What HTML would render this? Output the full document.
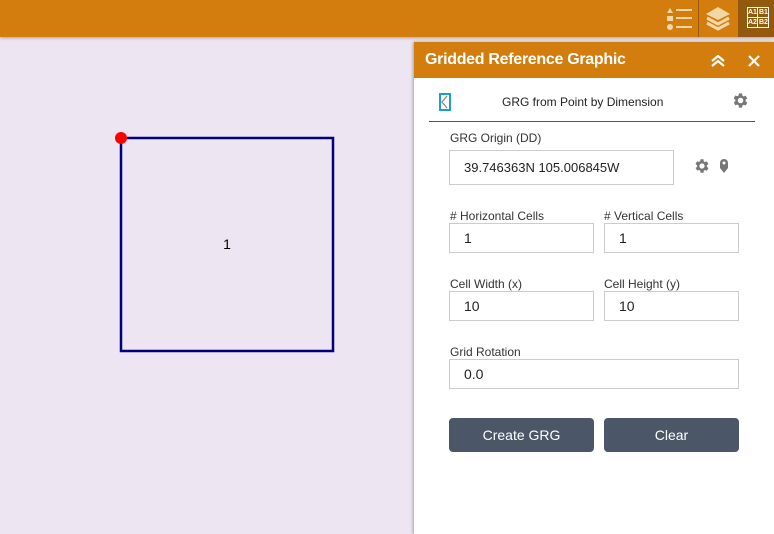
<!DOCTYPE html>
<html><head><style>
body{margin:0;width:774px;height:534px;overflow:hidden;background:#ede5f1;font-family:"Liberation Sans",sans-serif;position:relative}
.top{position:absolute;left:0;top:0;width:774px;height:37px;background:#d27d0e;box-shadow:0 1px 3px rgba(0,0,0,.3)}
.panel{position:absolute;left:414px;top:42px;width:360px;height:492px;background:#fff;box-shadow:-1px 0 3px rgba(0,0,0,.3)}
.hdr{height:36px;background:#d27d0e;color:#fff;font-weight:bold;font-size:16px;letter-spacing:-0.3px;line-height:36px;padding-left:11px}
.lbl{position:absolute;font-size:12px;color:#333}
.inp{position:absolute;border:1px solid #ccc;height:28px;box-sizing:border-box;font-size:14px;color:#222;line-height:28px;padding-left:14px}
.btn{position:absolute;background:#4b5667;color:#fff;border-radius:4px;font-size:14px;text-align:center;line-height:34px;height:34px;width:145px}
</style></head><body>
<div class="top">
<svg style="position:absolute;left:665px;top:5px" width="28" height="26"><polygon points="5,3 8,8 2,8" fill="#f5d7a6"/><rect x="2" y="11" width="6" height="5" fill="#f5d7a6"/><circle cx="5" cy="22" r="3" fill="#f5d7a6"/><rect x="11" y="4" width="16" height="2" fill="#f5d7a6"/><rect x="11" y="12" width="16" height="2" fill="#f5d7a6"/><rect x="11" y="21" width="16" height="2" fill="#f5d7a6"/></svg>
<div style="position:absolute;left:698px;top:0;width:1px;height:37px;background:#9a5b0c"></div>
<svg style="position:absolute;left:705px;top:5px" width="26" height="26"><polygon points="13,2 25,9 13,15 1,9" fill="#f5d7a6"/><polyline points="2,13 13,19 24,13" fill="none" stroke="#f5d7a6" stroke-width="3"/><polyline points="2,18 13,24 24,18" fill="none" stroke="#f5d7a6" stroke-width="3"/></svg>
<div style="position:absolute;left:738px;top:0;width:36px;height:37px;background:#935a0e"></div>
<div style="position:absolute;left:747px;top:7px;width:22px;height:21px;border:1px solid #fff;box-sizing:border-box;font-size:7px;color:#fff;font-weight:bold;line-height:10px;text-align:center">
<div style="position:absolute;left:9px;top:0;width:1px;height:19px;background:#fff"></div><div style="position:absolute;left:0;top:9px;width:20px;height:1px;background:#fff"></div>
<span style="position:absolute;left:0;top:0">A1</span><span style="position:absolute;left:11px;top:0">B1</span><span style="position:absolute;left:0;top:10px">A2</span><span style="position:absolute;left:11px;top:10px">B2</span></div>
</div>
<svg style="position:absolute;left:0;top:0" width="414" height="534"><rect x="121" y="138" width="212" height="213" fill="none" stroke="#00007f" stroke-width="2.5"/><circle cx="121" cy="138" r="6" fill="#f00"/><text x="227" y="249" font-size="14" text-anchor="middle" font-family="Liberation Sans" fill="#000">1</text></svg>
<div class="panel">
<div class="hdr">Gridded Reference Graphic
<svg style="position:absolute;left:297px;top:13px" width="14" height="12"><polyline points="1,6 7,1 13,6" fill="none" stroke="#fff" stroke-width="2.2"/><polyline points="1,11 7,6 13,11" fill="none" stroke="#fff" stroke-width="2.2"/></svg>
<svg style="position:absolute;left:334px;top:13px" width="12" height="12"><path d="M1,1L11,11M11,1L1,11" stroke="#fff" stroke-width="2.2"/></svg>
</div>
<div style="position:absolute;left:25px;top:51px;width:12px;height:18px;border:2px solid #1ba1c7;box-sizing:border-box"><svg width="8" height="14"><polyline points="6,1 1,7 6,13" fill="none" stroke="#888" stroke-width="1.3"/></svg></div>
<div style="position:absolute;left:88px;top:53px;font-size:12px;color:#222">GRG from Point by Dimension</div>
<svg style="position:absolute;left:317px;top:49px" width="19" height="19" viewBox="0 0 24 24"><path fill="#777" d="M19.4 13a7.5 7.5 0 000-2l2.1-1.6-2-3.5-2.5 1a7 7 0 00-1.7-1L15 3h-4l-.4 2.7a7 7 0 00-1.7 1l-2.5-1-2 3.5L6.6 11a7.5 7.5 0 000 2l-2.1 1.6 2 3.5 2.5-1a7 7 0 001.7 1L11 21h4l.4-2.7a7 7 0 001.7-1l2.5 1 2-3.5zM13 15.5a3.5 3.5 0 110-7 3.5 3.5 0 010 7z" transform="translate(-1 0)"/></svg>
<div style="position:absolute;left:15px;top:79px;width:326px;height:1px;background:#555"></div>
<div class="lbl" style="left:36px;top:89px">GRG Origin (DD)</div>
<div class="inp" style="left:35px;top:108px;width:225px;height:35px;line-height:33px;font-size:13px">39.746363N 105.006845W</div>
<svg style="position:absolute;left:279px;top:115px" width="18" height="18" viewBox="0 0 24 24"><path fill="#777" d="M19.4 13a7.5 7.5 0 000-2l2.1-1.6-2-3.5-2.5 1a7 7 0 00-1.7-1L15 3h-4l-.4 2.7a7 7 0 00-1.7 1l-2.5-1-2 3.5L6.6 11a7.5 7.5 0 000 2l-2.1 1.6 2 3.5 2.5-1a7 7 0 001.7 1L11 21h4l.4-2.7a7 7 0 001.7-1l2.5 1 2-3.5zM13 15.5a3.5 3.5 0 110-7 3.5 3.5 0 010 7z" transform="translate(-1 0)"/></svg>
<svg style="position:absolute;left:305px;top:116px" width="10" height="16"><path d="M5,1a4,4 0 014,4v5l-4,5-4-5V5a4,4 0 014-4z" fill="#777"/><circle cx="5" cy="5" r="1.5" fill="#fff"/></svg>
<div class="lbl" style="left:36px;top:167px">#  Horizontal Cells</div>
<div class="lbl" style="left:190px;top:167px">#  Vertical Cells</div>
<div class="inp" style="left:35px;top:181px;width:145px;height:30px">1</div>
<div class="inp" style="left:190px;top:181px;width:135px;height:30px">1</div>
<div class="lbl" style="left:36px;top:235px">Cell Width (x)</div>
<div class="lbl" style="left:190px;top:235px">Cell Height (y)</div>
<div class="inp" style="left:35px;top:249px;width:145px;height:30px">10</div>
<div class="inp" style="left:190px;top:249px;width:135px;height:30px">10</div>
<div class="lbl" style="left:36px;top:303px">Grid Rotation</div>
<div class="inp" style="left:35px;top:317px;width:290px;height:30px">0.0</div>
<div class="btn" style="left:35px;top:376px">Create GRG</div>
<div class="btn" style="left:190px;top:376px;width:135px">Clear</div>
</div>
</body></html>
